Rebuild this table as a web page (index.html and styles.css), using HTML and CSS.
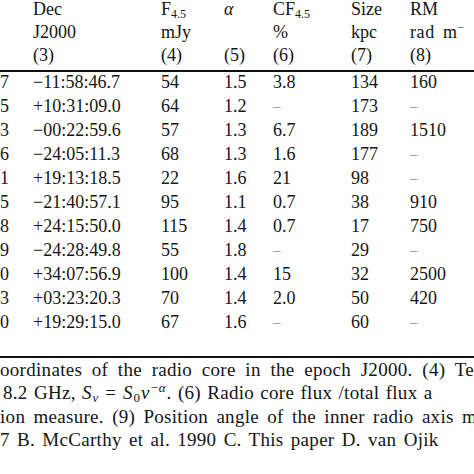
FILE: index.html
```html
<!DOCTYPE html>
<html lang="en">
<head>
  <meta charset="UTF-8" />
  <title>Radio sources table</title>
  <link rel="stylesheet" href="styles.css">
</head>
<body>

  <!-- Table -->
  <div class="sheet">
    <div class="thead">
      <div class="row">
        <span></span><span>Dec</span><span>F<sub>4.5</sub></span><span><i>α</i></span><span>CF<sub>4.5</sub></span><span>Size</span><span>RM</span>
      </div>
      <div class="row">
        <span></span><span>J2000</span><span>mJy</span><span></span><span>%</span><span>kpc</span><span class="unit">rad m<sup>−</sup></span>
      </div>
      <div class="row">
        <span></span><span>(3)</span><span>(4)</span><span>(5)</span><span>(6)</span><span>(7)</span><span>(8)</span>
      </div>
    </div>
    <div class="rule top"></div>
    <div class="tbody">
      <div class="row"><span class="ra">7</span><span>−11:58:46.7</span><span>54</span><span>1.5</span><span>3.8</span><span>134</span><span>160</span></div>
      <div class="row"><span class="ra">5</span><span>+10:31:09.0</span><span>64</span><span>1.2</span><span class="dash">–</span><span>173</span><span class="dash">–</span></div>
      <div class="row"><span class="ra">3</span><span>−00:22:59.6</span><span>57</span><span>1.3</span><span>6.7</span><span>189</span><span>1510</span></div>
      <div class="row"><span class="ra">6</span><span>−24:05:11.3</span><span>68</span><span>1.3</span><span>1.6</span><span>177</span><span class="dash">–</span></div>
      <div class="row"><span class="ra">1</span><span>+19:13:18.5</span><span>22</span><span>1.6</span><span>21</span><span>98</span><span class="dash">–</span></div>
      <div class="row"><span class="ra">5</span><span>−21:40:57.1</span><span>95</span><span>1.1</span><span>0.7</span><span>38</span><span>910</span></div>
      <div class="row"><span class="ra">8</span><span>+24:15:50.0</span><span>115</span><span>1.4</span><span>0.7</span><span>17</span><span>750</span></div>
      <div class="row"><span class="ra">9</span><span>−24:28:49.8</span><span>55</span><span>1.8</span><span class="dash">–</span><span>29</span><span class="dash">–</span></div>
      <div class="row"><span class="ra">0</span><span>+34:07:56.9</span><span>100</span><span>1.4</span><span>15</span><span>32</span><span>2500</span></div>
      <div class="row"><span class="ra">3</span><span>+03:23:20.3</span><span>70</span><span>1.4</span><span>2.0</span><span>50</span><span>420</span></div>
      <div class="row"><span class="ra">0</span><span>+19:29:15.0</span><span>67</span><span>1.6</span><span class="dash">–</span><span>60</span><span class="dash">–</span></div>
    </div>
    <div class="rule bottom"></div>

    <!-- Caption -->
    <div class="caption">
      <p class="l1">oordinates of the radio core in the epoch J2000. (4) Te</p>
      <p class="l2">8.2 GHz, <span class="math"><i>S<sub>ν</sub></i><span class="eq">=</span><i>S</i><sub>0</sub><i>ν</i><sup>−<i>α</i></sup></span>. (6) Radio core flux /total flux a</p>
      <p class="l3">ion measure. (9) Position angle of the inner radio axis m</p>
      <p class="l4">7 B. McCarthy et al. 1990 C. This paper D. van Ojik</p>
    </div>
  </div>

</body>
</html>
```

FILE: styles.css
```css
/* --------------------------------
   Reset / Basic
----------------------------------- */
* {
  margin: 0;
  padding: 0;
  box-sizing: border-box;
}
html, body {
  width: 474px;
  height: 474px;
  overflow: hidden;
  background: #fff;
  color: #151515;
  font-family: 'Liberation Serif', 'DejaVu Serif', serif;
  font-size: 18px;
}

/* --------------------------------
   Table
----------------------------------- */
.sheet {
  margin-top: -2px;
}
.row {
  display: grid;
  grid-template-columns: 33px 128px 63px 49px 78px 59px 1fr;
  white-space: nowrap;
}
.thead .row {
  line-height: 23px;
}
.tbody .row {
  line-height: 24px;
}
.row .ra {
  text-align: right;
  padding-right: 26px;
}
.row .unit {
  letter-spacing: 0.6px;
  word-spacing: 3px;
}
.row sub {
  font-size: 12px;
  vertical-align: -3px;
  line-height: 0;
}
.row sup {
  font-size: 12px;
  vertical-align: 7px;
  line-height: 0;
}
.dash {
  color: #8a8a8a;
  font-size: 15px;
}

.rule {
  height: 2px;
  background: #111;
}
.rule.top {
  margin: 3px 0 -2px;
}
.rule.bottom {
  margin-top: 22px;
}

/* --------------------------------
   Caption (justified lines, cut at the edges)
----------------------------------- */
.caption p {
  white-space: nowrap;
  font-size: 19px;
  line-height: 23.3px;
  letter-spacing: 0.3px;
}
.caption .l1 {
  word-spacing: 4.6px;
}
.caption .l2 {
  padding-left: 3px;
  word-spacing: 1.2px;
}
.caption .l3 {
  word-spacing: 3.2px;
}
.caption .l4 {
  word-spacing: 2.2px;
}
.caption .math {
  letter-spacing: 1px;
}
.caption .eq {
  margin: 0 6px;
}
.caption sub,
.caption sup {
  font-size: 13px;
  line-height: 0;
}
.caption sub {
  vertical-align: -3px;
}
.caption sup {
  vertical-align: 7px;
}
```
